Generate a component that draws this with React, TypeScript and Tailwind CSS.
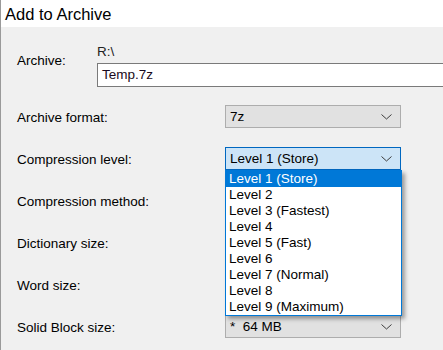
import React from "react";

const Chevron = () => (
  <svg width="11" height="6" viewBox="0 0 11 6" className="shrink-0">
    <path d="M0.5 0.5 L5.5 5 L10.5 0.5" fill="none" stroke="#3c3c3c" strokeWidth="1" />
  </svg>
);

const Combo = ({ text, focused }: { text?: string; focused?: boolean }) => (
  <div
    className={
      focused
        ? "w-[176px] h-[23px] shrink-0 border border-[#0067c0] bg-[#cce4f7] flex items-center pl-[4px] pr-[8px]"
        : "w-[176px] h-[23px] shrink-0 border border-[#adadad] bg-[#e1e1e1] flex items-center pl-[4px] pr-[8px]"
    }
  >
    <span className="flex-1 text-[13.5px] leading-[16px] text-black whitespace-pre">{text}</span>
    <Chevron />
  </div>
);

const Row = ({ label, text, focused }: { label: string; text?: string; focused?: boolean }) => (
  <div className="flex items-center h-[23px]">
    <div className="w-[208px] shrink-0 text-[13.5px] leading-[16px] text-black pt-[2px]">{label}</div>
    <Combo text={text} focused={focused} />
  </div>
);

const levels = [
  "Level 1 (Store)",
  "Level 2",
  "Level 3 (Fastest)",
  "Level 4",
  "Level 5 (Fast)",
  "Level 6",
  "Level 7 (Normal)",
  "Level 8",
  "Level 9 (Maximum)",
];

export default function App() {
  return (
    <div
      className="relative w-[443px] h-[350px] overflow-hidden bg-[#f0f0f0] border-l border-[#9a9a9a]"
      style={{ fontFamily: '"Liberation Sans", Arial, sans-serif' }}
    >
      <div className="h-[27px] bg-white pl-[4px] flex items-center text-[16.5px] leading-[20px] text-black">
        Add to Archive
      </div>

      <div className="pl-[16px]">
        <div className="flex pt-[17px]">
          <div className="w-[80px] shrink-0 text-[13.5px] leading-[16px] text-black pt-[9px]">Archive:</div>
          <div className="flex flex-col shrink-0">
            <div className="text-[13.5px] leading-[16px] text-[#222]">R:\</div>
            <div className="mt-[3px] w-[400px] h-[24px] border border-[#7a7a7a] bg-white flex items-center pl-[4px] text-[13.5px] text-[#1a0a20]">
              Temp.7z
            </div>
          </div>
        </div>

        <div className="flex flex-col gap-[19px] mt-[18px]">
          <Row label="Archive format:" text="7z" />
          <Row label="Compression level:" text="Level 1 (Store)" focused />
          <Row label="Compression method:" />
          <Row label="Dictionary size:" />
          <Row label="Word size:" />
          <Row label="Solid Block size:" text="*  64 MB" />
        </div>
      </div>

      <div className="absolute left-[224px] top-[170px] w-[177px] border border-[#0078d7] bg-white shadow-[3px_3px_4px_rgba(0,0,0,0.35)]">
        {levels.map((l, i) => (
          <div
            key={l}
            className={
              i === 0
                ? "h-[16px] leading-[16px] pl-[3px] text-[13.5px] bg-[#0078d7] text-white"
                : "h-[16px] leading-[16px] pl-[3px] text-[13.5px] text-black"
            }
          >
            {l}
          </div>
        ))}
      </div>
    </div>
  );
}
